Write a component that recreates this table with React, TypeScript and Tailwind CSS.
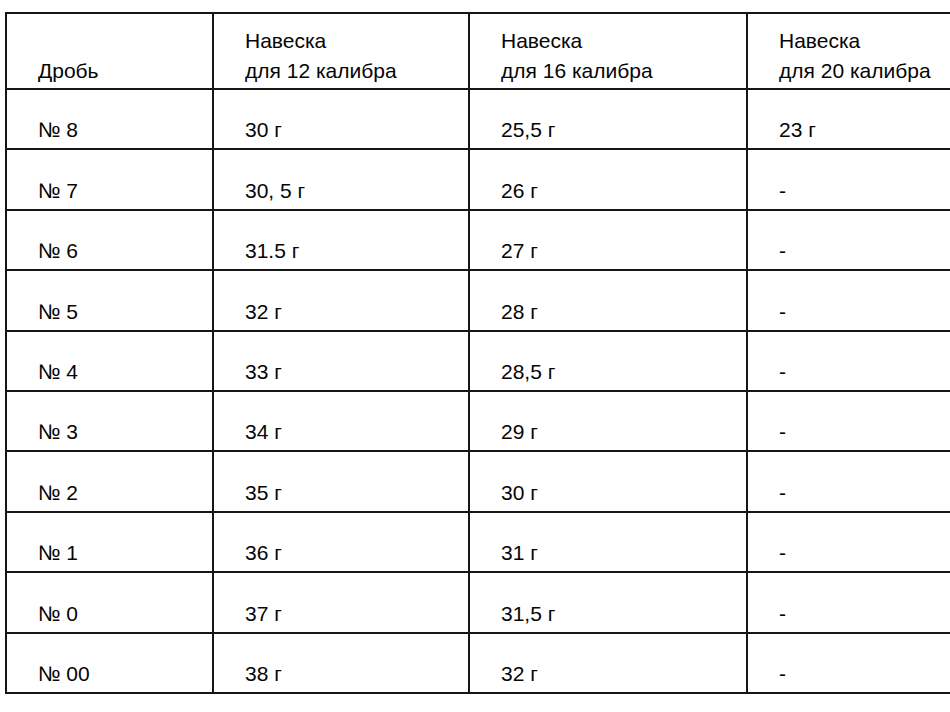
import React from "react";

const rows: [string, string, string, string][] = [
  ["№ 8", "30 г", "25,5 г", "23 г"],
  ["№ 7", "30, 5 г", "26 г", "-"],
  ["№ 6", "31.5 г", "27 г", "-"],
  ["№ 5", "32 г", "28 г", "-"],
  ["№ 4", "33 г", "28,5 г", "-"],
  ["№ 3", "34 г", "29 г", "-"],
  ["№ 2", "35 г", "30 г", "-"],
  ["№ 1", "36 г", "31 г", "-"],
  ["№ 0", "37 г", "31,5 г", "-"],
  ["№ 00", "38 г", "32 г", "-"],
];

function Cell({ children, header }: { children: React.ReactNode; header?: boolean }) {
  return (
    <div
      className={
        header
          ? "bg-white flex flex-col justify-end pl-[31px] pb-[2px] leading-[30px] whitespace-nowrap overflow-hidden"
          : "bg-white flex items-end pl-[31px] pb-[3px] leading-[30px] whitespace-nowrap overflow-hidden"
      }
    >
      {children}
    </div>
  );
}

export default function App() {
  return (
    <div
      className="w-[950px] h-[712px] bg-white overflow-hidden pt-[12px] pl-[5px] text-[#050505] text-[21px]"
      style={{ fontFamily: '"Liberation Sans", Arial, sans-serif' }}
    >
      <div className="grid grid-cols-[205px_254px_276px_1fr] grid-rows-[74px_repeat(10,58.4px)] gap-[2px] bg-[#161616] pt-[2px] pl-[2px] pb-[2px] w-[945px]">
        <Cell header>
          <span>Дробь</span>
        </Cell>
        <Cell header>
          <span>Навеска</span>
          <span>для 12 калибра</span>
        </Cell>
        <Cell header>
          <span>Навеска</span>
          <span>для 16 калибра</span>
        </Cell>
        <Cell header>
          <span>Навеска</span>
          <span>для 20 калибра</span>
        </Cell>
        {rows.map((r, i) => (
          <React.Fragment key={i}>
            <Cell>{r[0]}</Cell>
            <Cell>{r[1]}</Cell>
            <Cell>{r[2]}</Cell>
            <Cell>{r[3]}</Cell>
          </React.Fragment>
        ))}
      </div>
    </div>
  );
}
